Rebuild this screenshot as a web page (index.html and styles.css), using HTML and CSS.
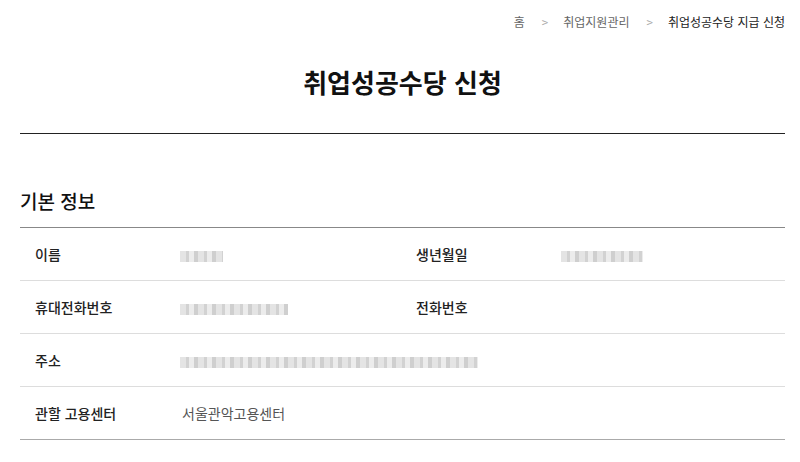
FILE: index.html
```html
<!DOCTYPE html>
<html lang="ko">
<head>
<meta charset="utf-8">
<link rel="stylesheet" href="styles.css">
</head>
<body>
<div class="page">
  <nav class="crumbs">
    <span class="crumb">홈</span>
    <span class="sep">&gt;</span>
    <span class="crumb">취업지원관리</span>
    <span class="sep">&gt;</span>
    <span class="crumb current">취업성공수당 지급 신청</span>
  </nav>
  <header class="head">
    <h1 class="title">취업성공수당 신청</h1>
  </header>
  <section class="section">
    <h2 class="sec-title">기본 정보</h2>
    <table class="info">
      <colgroup>
        <col class="c-label"><col class="c-value"><col class="c-label"><col class="c-value2">
      </colgroup>
      <tr>
        <th>이름</th>
        <td><span class="blur" style="width:43px"></span></td>
        <th>생년월일</th>
        <td><span class="blur" style="width:82px"></span></td>
      </tr>
      <tr>
        <th>휴대전화번호</th>
        <td><span class="blur" style="width:108px"></span></td>
        <th>전화번호</th>
        <td></td>
      </tr>
      <tr>
        <th>주소</th>
        <td colspan="3"><span class="blur" style="width:298px"></span></td>
      </tr>
      <tr class="last">
        <th>관할 고용센터</th>
        <td colspan="3">서울관악고용센터</td>
      </tr>
    </table>
  </section>
</div>
</body>
</html>
```
FILE: styles.css
```css
* { box-sizing: border-box; }
html, body { margin: 0; padding: 0; background: #fff; }
body {
  font-family: "Noto Sans CJK KR", "Noto Sans", sans-serif;
  color: #222;
}
.page {
  width: 800px;
  padding: 0 15px 0 20px;
}
.crumbs {
  display: flex;
  justify-content: flex-end;
  align-items: center;
  padding-top: 13px;
  font-size: 12px;
  line-height: 18px;
  color: #666;
}
.crumb { color: #666; }
.crumb.current { color: #222; }
.sep {
  color: #aaa;
  margin: 0 15px 0 17px;
  font-size: 11.5px;
}
.head {
  border-bottom: 1px solid #222;
  padding-bottom: 33px;
}
.title {
  margin: 32px 0 0;
  text-align: center;
  font-size: 26px;
  line-height: 37px;
  font-weight: 700;
  color: #111;
}
.section { padding-top: 53px; }
.sec-title {
  margin: 0 0 13px;
  font-size: 19px;
  line-height: 27px;
  font-weight: 500;
  color: #111;
}
.info {
  width: 100%;
  border-collapse: collapse;
  border-top: 1px solid #888;
  table-layout: fixed;
}
.c-label { width: 146px; }
.c-value { width: 235px; }
.c-value2 { width: auto; }
.info tr { border-bottom: 1px solid #ddd; }
.info tr.last { border-bottom: 1px solid #aaa; }
.info th, .info td {
  height: 53px;
  padding: 0 0 0 15px;
  font-size: 14px;
  text-align: left;
  vertical-align: middle;
}
.info th {
  font-weight: 500;
  color: #222;
}
.info td {
  color: #555;
  font-weight: 400;
  padding-left: 16px;
}
.blur {
  display: inline-block;
  height: 11px;
  margin-left: -2px;
  vertical-align: middle;
  background:
    repeating-linear-gradient(90deg, #e4e4e4 0 6px, #d2d2d2 6px 9px, #ececec 9px 14px, #cfcfcf 14px 18px);
  filter: blur(0.6px);
}
```
